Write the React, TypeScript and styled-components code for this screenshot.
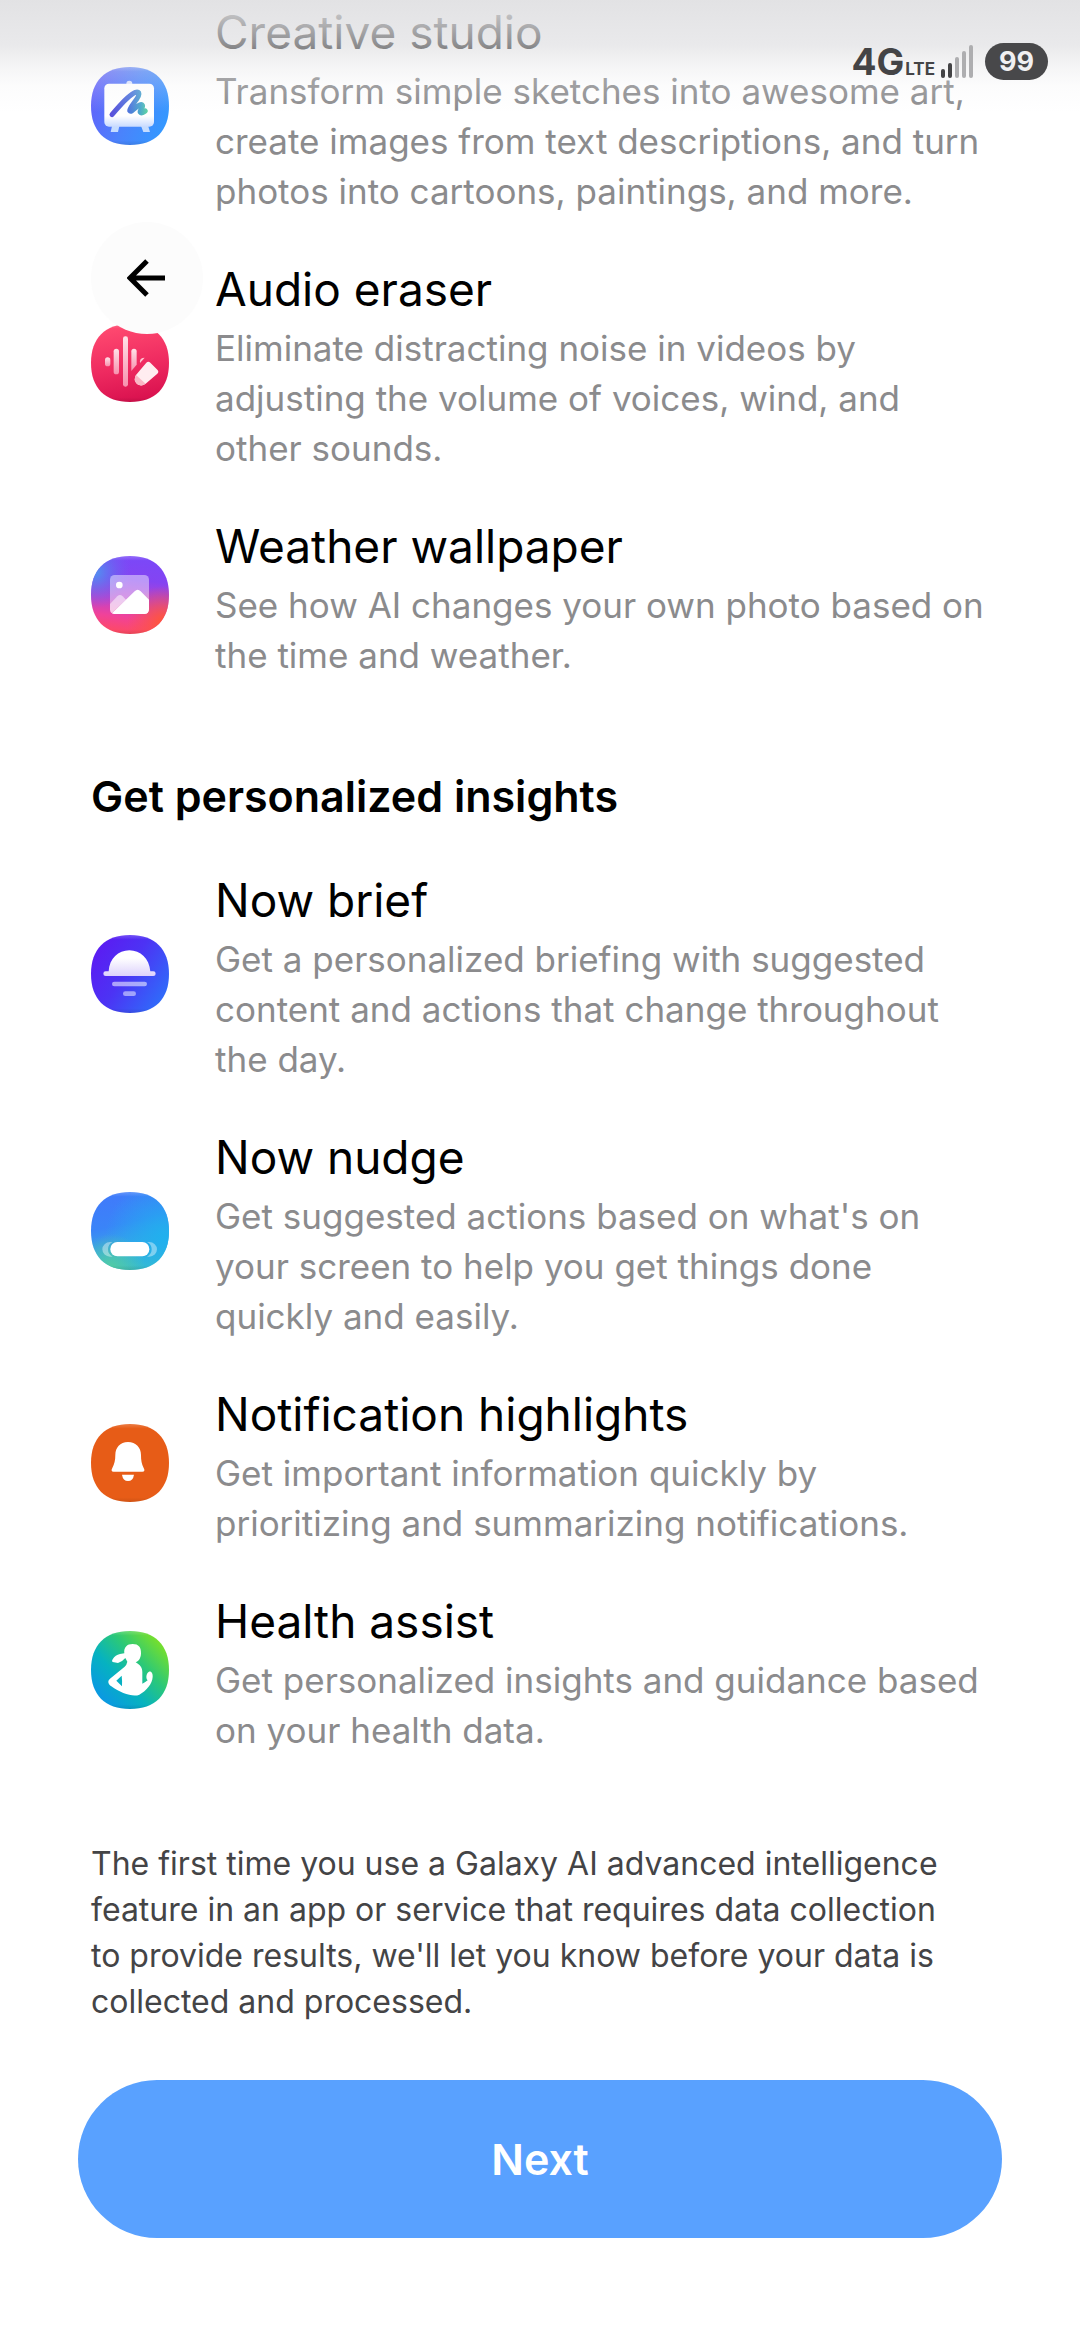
import { ReactNode } from 'react';
import styled, { createGlobalStyle } from 'styled-components';

const GlobalStyle = createGlobalStyle`
  * {
    box-sizing: border-box;
  }
  body {
    margin: 0;
    background: #FFFFFF;
    color: #000000;
    font-family: Inter, Roboto, 'Liberation Sans', sans-serif;
  }
`;

const Page = styled.div`
  position: relative;
  min-height: 100vh;
  overflow: hidden;
`;

const StatusBar = styled.header`
  position: absolute;
  top: 0;
  left: 0;
  right: 0;
  z-index: 2;
  display: flex;
  justify-content: flex-end;
  align-items: flex-start;
  height: 112px;
  padding: 43px 32px 0 0;
  background: linear-gradient(
    rgba(225, 225, 227, 0.96) 0px,
    rgba(221, 221, 224, 0.64) 45px,
    rgba(228, 228, 230, 0.36) 68px,
    rgba(240, 240, 242, 0.2) 86px,
    rgba(255, 255, 255, 0) 112px
  );
`;

const Network = styled.div`
  display: flex;
  align-items: baseline;
  gap: 1px;
  margin-right: 6px;
  color: #444446;
  font-weight: 700;
  font-size: 37px;
  line-height: 38px;
`;

const NetworkSuffix = styled.span`
  font-size: 17px;
  line-height: 18px;
`;

const SignalBars = styled.svg`
  width: 32px;
  height: 36px;
  margin-right: 12px;
`;

const Battery = styled.div`
  width: 63px;
  height: 37px;
  border-radius: 19px;
  background: #48484A;
  color: #F0F0F2;
  font-weight: 700;
  font-size: 27px;
  line-height: 37px;
  text-align: center;
`;

const BackButton = styled.button`
  position: absolute;
  top: 222px;
  left: 91px;
  z-index: 1;
  display: flex;
  justify-content: center;
  align-items: center;
  width: 112px;
  height: 112px;
  padding: 0;
  border: none;
  border-radius: 50%;
  background: #FCFCFC;
  cursor: pointer;
`;

const Content = styled.main`
  padding: 0 78px 102px;
`;

const FeatureList = styled.ul`
  display: flex;
  flex-direction: column;
  gap: 37px;
  margin: 0;
  padding: 0 12px 0 13px;
  list-style: none;
`;

const ScrolledList = styled(FeatureList)`
  margin-top: -4px;
`;

const Feature = styled.li`
  display: flex;
  align-items: center;
  gap: 46px;
`;

const FeatureIcon = styled.svg`
  flex: none;
  width: 78px;
  height: 78px;
`;

const FeatureText = styled.div`
  flex: 1;
  padding-top: 6px;
`;

const FeatureTitle = styled.h3`
  margin: 0 0 4px;
  font-weight: 400;
  font-size: 46px;
  line-height: 60px;
`;

const FeatureDescription = styled.p`
  margin: 0;
  color: #8B8B8D;
  font-size: 35px;
  line-height: 50px;
`;

const SectionTitle = styled.h2`
  margin: 90px 13px 42px;
  font-weight: 600;
  font-size: 43px;
  line-height: 52px;
`;

const Notice = styled.p`
  margin: 86px 42px 55px 13px;
  color: #444446;
  font-size: 32px;
  line-height: 46px;
`;

const NextButton = styled.button`
  display: block;
  width: 100%;
  height: 158px;
  border: none;
  border-radius: 79px;
  background: #59A1FF;
  color: #FFFFFF;
  font-family: inherit;
  font-weight: 600;
  font-size: 43px;
  cursor: pointer;
`;

const SQUIRCLE = 'M39 0C64 0 78 14 78 39S64 78 39 78 0 64 0 39 14 0 39 0Z';

interface IIconBase {
  fill: string;
  overlays?: string[];
  defs?: ReactNode;
  children: ReactNode;
}

// glyphs are drawn on a grid three times finer than the tile
const IconBase = ({ fill, overlays = [], defs, children }: IIconBase) => (
  <FeatureIcon viewBox="0 0 78 78" aria-hidden="true">
    <defs>
      <linearGradient id="tileEdge" x1="0" y1="0" x2="0" y2="1">
        <stop offset="0" stopColor="#FFFFFF" stopOpacity="0.2" />
        <stop offset="0.06" stopColor="#FFFFFF" stopOpacity="0" />
        <stop offset="0.94" stopColor="#000000" stopOpacity="0" />
        <stop offset="1" stopColor="#000000" stopOpacity="0.1" />
      </linearGradient>
      {defs}
    </defs>
    <path d={SQUIRCLE} fill={fill} />
    {overlays.map((overlay) => (
      <path key={overlay} d={SQUIRCLE} fill={overlay} />
    ))}
    <path d={SQUIRCLE} fill="url(#tileEdge)" />
    <g transform="translate(-11 -12) scale(0.3333)">{children}</g>
  </FeatureIcon>
);

const CreativeIcon = () => (
  <IconBase
    fill="url(#creativeBg)"
    defs={
      <>
        <linearGradient id="creativeBg" x1="0" y1="0.35" x2="1" y2="0.7">
          <stop offset="0" stopColor="#6262FA" />
          <stop offset="0.5" stopColor="#4A83FC" />
          <stop offset="1" stopColor="#3399FF" />
        </linearGradient>
        <linearGradient id="creativeBoard" x1="0" y1="0" x2="0" y2="1">
          <stop offset="0.75" stopColor="#FFFFFF" />
          <stop offset="1" stopColor="#C9DBFF" />
        </linearGradient>
        <linearGradient id="creativeStroke" gradientUnits="userSpaceOnUse" x1="95" y1="150" x2="205" y2="165">
          <stop offset="0" stopColor="#5A50DC" />
          <stop offset="0.5" stopColor="#4E78DC" />
          <stop offset="0.78" stopColor="#4AA8CC" />
          <stop offset="1" stopColor="#62D8A0" />
        </linearGradient>
      </>
    }
  >
    <circle cx="148" cy="86" r="9" fill="#D9E2FF" />
    <path d="M98 205h22l-6 26H92zM180 205h22l8 26h-20z" fill="#C5DCFF" />
    <rect x="73" y="86" width="149" height="129" rx="14" fill="url(#creativeBoard)" />
    <path
      d="M96 179C118 154 143 121 166 112C182 107 178 122 169 134C159 148 147 162 149 167C155 176 175 144 186 149C194 155 176 167 181 172C184 176 192 172 196 168"
      fill="none"
      stroke="url(#creativeStroke)"
      strokeWidth="15"
      strokeLinecap="round"
      strokeLinejoin="round"
    />
  </IconBase>
);

const AudioIcon = () => (
  <IconBase
    fill="url(#audioBg)"
    defs={
      <>
        <linearGradient id="audioBg" x1="0.4" y1="0" x2="0.6" y2="1">
          <stop offset="0" stopColor="#FF4A70" />
          <stop offset="0.55" stopColor="#EE2A60" />
          <stop offset="1" stopColor="#D8104E" />
        </linearGradient>
        <linearGradient id="audioWave" x1="0" y1="0" x2="0" y2="1">
          <stop offset="0" stopColor="#FFE2E8" />
          <stop offset="1" stopColor="#F791AE" />
        </linearGradient>
      </>
    }
  >
    <g transform="translate(-30 -310)">
      <rect x="105" y="446" width="16" height="27" rx="8" fill="url(#audioWave)" />
      <rect x="131" y="420" width="16" height="77" rx="8" fill="url(#audioWave)" />
      <rect x="159" y="383" width="15" height="151" rx="7" fill="url(#audioWave)" />
      <path d="M184 428a8 8 0 0 1 16 0V468L184 487z" fill="url(#audioWave)" />
      <path d="M210 458q0-11 14-11L210 463z" fill="#FFC4D2" />
      <path
        d="M229 462Q235 457 241 462L262 483Q268 489 262 495L227 525Q214 535 201 526Q189 513 198 499Z"
        fill="#FFEDF0"
      />
      <path d="M198 499L227 525Q214 535 201 526Q189 513 198 499Z" fill="#FAB6C5" />
    </g>
  </IconBase>
);

const WeatherIcon = () => (
  <IconBase
    fill="url(#weatherBg)"
    overlays={['url(#weatherBlue)', 'url(#weatherRed)']}
    defs={
      <>
        <linearGradient id="weatherBg" x1="0.55" y1="0" x2="0.45" y2="1">
          <stop offset="0" stopColor="#7A48F8" />
          <stop offset="0.3" stopColor="#8444F2" />
          <stop offset="0.55" stopColor="#B842D0" />
          <stop offset="0.78" stopColor="#F0429A" />
          <stop offset="1" stopColor="#FF4A60" />
        </linearGradient>
        <radialGradient id="weatherBlue" gradientUnits="userSpaceOnUse" cx="4" cy="16" r="36">
          <stop offset="0" stopColor="#4F94F0" />
          <stop offset="1" stopColor="#6C60F0" stopOpacity="0" />
        </radialGradient>
        <radialGradient id="weatherRed" gradientUnits="userSpaceOnUse" cx="72" cy="66" r="36">
          <stop offset="0" stopColor="#FF5638" />
          <stop offset="1" stopColor="#FF5638" stopOpacity="0" />
        </radialGradient>
      </>
    }
  >
    <rect x="90" y="93" width="117" height="117" rx="14" fill="#FFFFFF" fillOpacity="0.45" />
    <path d="M90 180L112 157Q120 149 128 157L138 167L95 207Q90 204 90 196z" fill="#FFFFFF" fillOpacity="0.5" />
    <path d="M96 208L164 142Q173 133 182 142L207 167V196Q207 210 193 210H104Q99 210 96 208Z" fill="#FFFFFF" />
    <circle cx="118" cy="123" r="10" fill="#FFFFFF" />
  </IconBase>
);

const BriefIcon = () => (
  <IconBase
    fill="url(#briefBg)"
    defs={
      <>
        <linearGradient id="briefBg" x1="0.05" y1="0.2" x2="0.95" y2="0.8">
          <stop offset="0" stopColor="#5B1CF2" />
          <stop offset="0.45" stopColor="#4C33F4" />
          <stop offset="1" stopColor="#2F6CFA" />
        </linearGradient>
        <linearGradient id="briefSun" x1="0" y1="0" x2="0" y2="1">
          <stop offset="0.3" stopColor="#FFFFFF" />
          <stop offset="1" stopColor="#DDD2FC" />
        </linearGradient>
      </>
    }
  >
    <g transform="translate(0 3)">
      <path
        d="M86 142C88 104 115 79 148 79S208 104 211 142H220a7 7 0 0 1 0 14H77a7 7 0 0 1 0-14z"
        fill="url(#briefSun)"
      />
      <rect x="96" y="173" width="105" height="14" rx="7" fill="#FFFFFF" fillOpacity="0.55" />
      <rect x="129" y="202" width="39" height="14" rx="7" fill="#FFFFFF" fillOpacity="0.5" />
    </g>
  </IconBase>
);

const NudgeIcon = () => (
  <IconBase
    fill="url(#nudgeBg)"
    overlays={['url(#nudgeCyan)', 'url(#nudgeGreen)']}
    defs={
      <>
        <linearGradient id="nudgeBg" x1="0.3" y1="0.1" x2="0.5" y2="1">
          <stop offset="0" stopColor="#3F7CFA" />
          <stop offset="0.35" stopColor="#3A84F8" />
          <stop offset="0.7" stopColor="#38A8E4" />
          <stop offset="1" stopColor="#40C0C4" />
        </linearGradient>
        <radialGradient id="nudgeCyan" gradientUnits="userSpaceOnUse" cx="74" cy="46" r="60">
          <stop offset="0" stopColor="#20B0EE" />
          <stop offset="1" stopColor="#20B0EE" stopOpacity="0" />
        </radialGradient>
        <radialGradient id="nudgeGreen" gradientUnits="userSpaceOnUse" cx="20" cy="76" r="34">
          <stop offset="0" stopColor="#52CCA4" />
          <stop offset="1" stopColor="#52CCA4" stopOpacity="0" />
        </radialGradient>
      </>
    }
  >
    <g transform="translate(0 -3)">
      <path d="M98 189H90a23 22 0 0 0 0 44H98Q84 226 84 211T98 189Z" fill="#FFFFFF" fillOpacity="0.4" />
      <path d="M201 189H208a23 22 0 0 1 0 44H201Q215 226 215 211T201 189Z" fill="#FFFFFF" fillOpacity="0.4" />
      <rect x="91" y="189" width="117" height="43" rx="21" fill="#FFFFFF" />
    </g>
  </IconBase>
);

const BellIcon = () => (
  <IconBase fill="#E75C17">
    <path
      d="M144 90C168 90 183 107 183 129C183 145 185 156 191 168Q197 179 187 179H101Q91 179 97 168C103 156 106 145 106 129C106 107 120 90 144 90Z"
      fill="#FFFFFF"
    />
    <path d="M126 188H162Q159 207 144 207T126 188Z" fill="#FFFFFF" />
  </IconBase>
);

const HealthIcon = () => (
  <IconBase
    fill="url(#healthBg)"
    defs={
      <linearGradient id="healthBg" x1="0.15" y1="0.85" x2="0.95" y2="0.1">
        <stop offset="0" stopColor="#0A9AE0" />
        <stop offset="0.3" stopColor="#06B2C0" />
        <stop offset="0.6" stopColor="#2BC878" />
        <stop offset="1" stopColor="#86E41C" />
      </linearGradient>
    }
  >
    <path
      fillRule="evenodd"
      d="M133 103C131 85 141 75 158 75C176 75 184 85 183 104C182 118 177 125 167 130C180 137 188 147 187 160V194Q197 190 203 184C197 178 198 163 207 158C215 156 219 165 218 174C217 194 200 215 178 227C160 235 122 223 94 202C84 195 82 186 90 179L134 143Q140 138 142 128L136 117Q126 129 114 132L98 129Q94 127 98 121Q106 108 120 105ZM125 170L109 185L126 202Q127 185 125 170Z"
      fill="#FFFFFF"
    />
  </IconBase>
);

interface IFeature {
  title: string;
  description: string;
  icon: ReactNode;
}

const editingFeatures: IFeature[] = [
  {
    title: 'Creative studio',
    description:
      'Transform simple sketches into awesome art, create images from text descriptions, and turn photos into cartoons, paintings, and more.',
    icon: <CreativeIcon />,
  },
  {
    title: 'Audio eraser',
    description:
      'Eliminate distracting noise in videos by adjusting the volume of voices, wind, and other sounds.',
    icon: <AudioIcon />,
  },
  {
    title: 'Weather wallpaper',
    description: 'See how AI changes your own photo based on the time and weather.',
    icon: <WeatherIcon />,
  },
];

const insightFeatures: IFeature[] = [
  {
    title: 'Now brief',
    description:
      'Get a personalized briefing with suggested content and actions that change throughout the day.',
    icon: <BriefIcon />,
  },
  {
    title: 'Now nudge',
    description:
      "Get suggested actions based on what's on your screen to help you get things done quickly and easily.",
    icon: <NudgeIcon />,
  },
  {
    title: 'Notification highlights',
    description: 'Get important information quickly by prioritizing and summarizing notifications.',
    icon: <BellIcon />,
  },
  {
    title: 'Health assist',
    description: 'Get personalized insights and guidance based on your health data.',
    icon: <HealthIcon />,
  },
];

const renderFeature = ({ title, description, icon }: IFeature) => (
  <Feature key={title}>
    {icon}
    <FeatureText>
      <FeatureTitle>{title}</FeatureTitle>
      <FeatureDescription>{description}</FeatureDescription>
    </FeatureText>
  </Feature>
);

const App = () => {

  return (
    <Page>
      <GlobalStyle />
      <StatusBar>
        <Network>
          4G<NetworkSuffix>LTE</NetworkSuffix>
        </Network>
        <SignalBars viewBox="0 0 32 36" aria-hidden="true">
          <rect x="0" y="26" width="4" height="9" rx="2" fill="#444446" />
          <rect x="7" y="20" width="4" height="15" rx="2" fill="#444446" />
          <rect x="14" y="14" width="4" height="21" rx="2" fill="#AEAEB0" />
          <rect x="21" y="8" width="4" height="27" rx="2" fill="#AEAEB0" />
          <rect x="28" y="2" width="4" height="33" rx="2" fill="#AEAEB0" />
        </SignalBars>
        <Battery>99</Battery>
      </StatusBar>
      <BackButton type="button" aria-label="Back">
        <svg width="40" height="40" viewBox="0 0 40 40" fill="none" stroke="#000000" strokeWidth="5">
          <path d="M20 3L3 20L20 37M3 20H38" />
        </svg>
      </BackButton>
      <Content>
        <ScrolledList>{editingFeatures.map(renderFeature)}</ScrolledList>
        <SectionTitle>Get personalized insights</SectionTitle>
        <FeatureList>{insightFeatures.map(renderFeature)}</FeatureList>
        <Notice>
          The first time you use a Galaxy AI advanced intelligence feature in an app or service that
          requires data collection to provide results, we'll let you know before your data is
          collected and processed.
        </Notice>
        <NextButton type="button">Next</NextButton>
      </Content>
    </Page>
  );
};

export default App;
